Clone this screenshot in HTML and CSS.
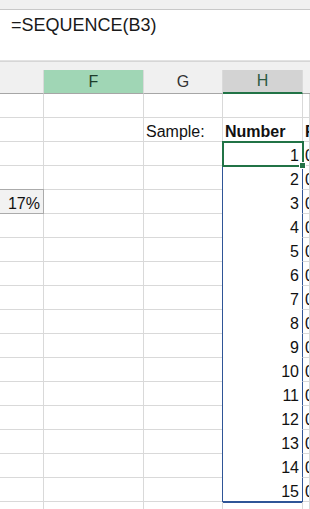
FILE: index.html
```html
<!DOCTYPE html>
<html>
<head>
  <title>SEQUENCE sample</title>
  <link rel="stylesheet" href="styles.css">
</head>
<body>
  <div class="topbar"></div>
  <div class="formula">=SEQUENCE(B3)</div>
  <div class="gap"></div>

  <div class="row heads">
    <div class="h"></div>
    <div class="h h-hl">F</div>
    <div class="h">G</div>
    <div class="h h-act">H</div>
    <div class="h h-last"></div>
  </div>

  <div class="sheet">
    <div class="row"><div class="c"></div><div class="c"></div><div class="c"></div><div class="c"></div><div class="c"></div></div>
    <div class="row"><div class="c"></div><div class="c"></div><div class="c l">Sample:</div><div class="c l b">Number</div><div class="c l b">Random</div></div>
    <div class="row"><div class="c"></div><div class="c"></div><div class="c"></div><div class="c rng act">1</div><div class="c l">0.482</div></div>
    <div class="row"><div class="c"></div><div class="c"></div><div class="c"></div><div class="c rng">2</div><div class="c l">0.917</div></div>
    <div class="row"><div class="c pct">17%</div><div class="c"></div><div class="c"></div><div class="c rng">3</div><div class="c l">0.305</div></div>
    <div class="row"><div class="c"></div><div class="c"></div><div class="c"></div><div class="c rng">4</div><div class="c l">0.661</div></div>
    <div class="row"><div class="c"></div><div class="c"></div><div class="c"></div><div class="c rng">5</div><div class="c l">0.128</div></div>
    <div class="row"><div class="c"></div><div class="c"></div><div class="c"></div><div class="c rng">6</div><div class="c l">0.754</div></div>
    <div class="row"><div class="c"></div><div class="c"></div><div class="c"></div><div class="c rng">7</div><div class="c l">0.093</div></div>
    <div class="row"><div class="c"></div><div class="c"></div><div class="c"></div><div class="c rng">8</div><div class="c l">0.540</div></div>
    <div class="row"><div class="c"></div><div class="c"></div><div class="c"></div><div class="c rng">9</div><div class="c l">0.876</div></div>
    <div class="row"><div class="c"></div><div class="c"></div><div class="c"></div><div class="c rng">10</div><div class="c l">0.219</div></div>
    <div class="row"><div class="c"></div><div class="c"></div><div class="c"></div><div class="c rng">11</div><div class="c l">0.637</div></div>
    <div class="row"><div class="c"></div><div class="c"></div><div class="c"></div><div class="c rng">12</div><div class="c l">0.408</div></div>
    <div class="row"><div class="c"></div><div class="c"></div><div class="c"></div><div class="c rng">13</div><div class="c l">0.962</div></div>
    <div class="row"><div class="c"></div><div class="c"></div><div class="c"></div><div class="c rng">14</div><div class="c l">0.351</div></div>
    <div class="row"><div class="c"></div><div class="c"></div><div class="c"></div><div class="c rng rng-end">15</div><div class="c l">0.770</div></div>
    <div class="row"><div class="c"></div><div class="c"></div><div class="c"></div><div class="c"></div><div class="c"></div></div>
  </div>
</body>
</html>
```

FILE: styles.css
```css
body {
  margin: 0;
  padding: 0;
  width: 310px;
  height: 509px;
  overflow: hidden;
  background: white;
  font-family: "Liberation Sans", Arial, sans-serif;
  color: #111;
}

.topbar {
  height: 9px;
  background: #f0f0f0;
  border-bottom: 1px solid #c8c8c8;
}

.formula {
  height: 45px;
  padding: 5px 0 0 11px;
  font-size: 18px;
  line-height: 20px;
  color: #1a1a1a;
  border-bottom: 1px solid #e2e2e2;
}

.gap {
  height: 8px;
  background: #f0f0f0;
  border-top: 1px solid #d6d6d6;
}

.row {
  display: grid;
  grid-template-columns: 44px 100px 79px 80px 1fr;
}

/* column headers */
.heads {
  background: #f0f0f0;
}

.h {
  box-sizing: border-box;
  height: 24px;
  line-height: 23px;
  text-align: center;
  font-size: 16px;
  color: #333;
  border-right: 1px solid #dadada;
  border-bottom: 1px solid #a6a6a6;
}

.h-hl {
  background: #a0d6b5;
  color: #1d3d2b;
}

.h-act {
  background: #d3d3d3;
  color: #2c5a42;
  border-bottom: 2px solid #217346;
  line-height: 22px;
}

.h-last {
  border-right: none;
}

/* cells */
.c {
  box-sizing: border-box;
  height: 24px;
  padding: 5px 3px 0 2px;
  font-size: 16px;
  line-height: 18px;
  text-align: right;
  white-space: nowrap;
  overflow: hidden;
  border-right: 1px solid #d9d9d9;
  border-bottom: 1px solid #d9d9d9;
}

.c.l {
  text-align: left;
}

.c.b {
  font-weight: bold;
}

.pct {
  background: #f2f2f2;
  border-right-color: #ababab;
  border-bottom-color: #ababab;
  box-shadow: 0 -1px 0 #ababab;
}

.rng {
  overflow: visible;
  border-right-color: #2f5597;
  border-bottom-color: white;
  box-shadow: -1px 0 0 #2f5597;
}

.rng-end {
  border-bottom-color: #2f5597;
  box-shadow: -1px 0 0 #2f5597, -1px 1px 0 #2f5597;
}

.act {
  position: relative;
  outline: 2px solid #217346;
  outline-offset: -1px;
}

.act::after {
  content: "";
  position: absolute;
  right: -4px;
  bottom: -4px;
  width: 5px;
  height: 5px;
  background: #217346;
  border: 1px solid white;
}
```
